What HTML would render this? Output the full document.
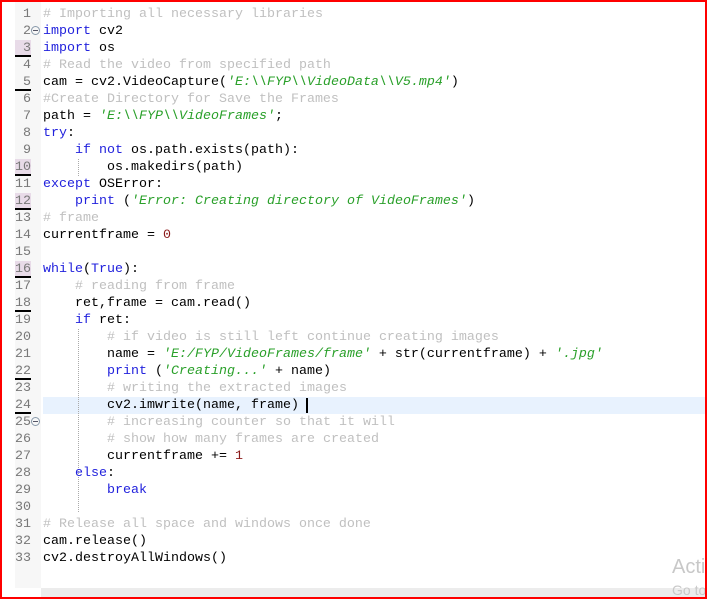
<!DOCTYPE html><html><head><style>
body{margin:0;width:707px;height:599px;overflow:hidden;background:#fff;position:relative;font-family:"Liberation Mono",monospace;}
.frame{position:absolute;left:0;top:0;width:703px;height:595px;border:2px solid #f00;}
.gut{position:absolute;left:15px;top:2px;width:26px;height:586px;background:#f7f7f7;}
.hl{position:absolute;left:43px;top:397px;width:662px;height:17px;background:#e8f2fe;}
.ln{position:absolute;left:15px;width:16px;text-align:right;font-size:13.33px;color:#787878;height:17px;line-height:17px;}
.ln.p{background:#e8dbe8;}
.ln.u{border-bottom:2px solid #000;height:15px;line-height:17px;}
.c{position:absolute;left:43px;font-size:13.33px;line-height:17px;height:17px;white-space:pre;color:#000;}
.k{color:#2222dd}.s{color:#2aa02a;font-style:italic}.m{color:#c0c0c0}.n{color:#8b1a1a}
.g{position:absolute;width:0;border-left:1px dotted #aaa;}
.fold{position:absolute;left:31px;width:7px;height:7px;border:1px solid #8899aa;border-radius:50%;font-size:0}
.fold:after{content:"";position:absolute;left:1px;top:3px;width:5px;height:1px;background:#556;}
.sb{position:absolute;left:41px;top:588px;width:664px;height:9px;background:#ececec;}
</style></head><body>
<div class="gut"></div>
<div class="hl"></div>
<div class="sb"></div>
<div class="g" style="left:78px;top:159px;height:17px"></div>
<div class="g" style="left:78px;top:329px;height:183px"></div>
<div class="fold" style="top:26px"></div>
<div class="fold" style="top:417px"></div>
<div id="L"></div>
<div style="position:absolute;left:306px;top:398px;width:2px;height:15px;background:#000"></div>
<div style="position:absolute;left:672px;top:556px;font-family:'Liberation Sans',sans-serif;font-size:20px;color:#c8c8c8">Acti</div>
<div style="position:absolute;left:672px;top:582px;font-family:'Liberation Sans',sans-serif;font-size:14px;color:#c8c8c8">Go to</div>
<div class="frame"></div>
<script>
var lines=[
'<span class="m"># Importing all necessary libraries</span>',
'<span class="k">import</span> cv2',
'<span class="k">import</span> os',
'<span class="m"># Read the video from specified path</span>',
'cam = cv2.VideoCapture(<span class="s">\'E:\\\\FYP\\\\VideoData\\\\V5.mp4\'</span>)',
'<span class="m">#Create Directory for Save the Frames</span>',
'path = <span class="s">\'E:\\\\FYP\\\\VideoFrames\'</span>;',
'<span class="k">try</span>:',
'    <span class="k">if not</span> os.path.exists(path):',
'        os.makedirs(path)',
'<span class="k">except</span> OSError:',
'    <span class="k">print</span> (<span class="s">\'Error: Creating directory of VideoFrames\'</span>)',
'<span class="m"># frame</span>',
'currentframe = <span class="n">0</span>',
'',
'<span class="k">while</span>(<span class="k">True</span>):',
'    <span class="m"># reading from frame</span>',
'    ret,frame = cam.read()',
'    <span class="k">if</span> ret:',
'        <span class="m"># if video is still left continue creating images</span>',
'        name = <span class="s">\'E:/FYP/VideoFrames/frame\'</span> + str(currentframe) + <span class="s">\'.jpg\'</span>',
'        <span class="k">print</span> (<span class="s">\'Creating...\'</span> + name)',
'        <span class="m"># writing the extracted images</span>',
'        cv2.imwrite(name, frame)',
'        <span class="m"># increasing counter so that it will</span>',
'        <span class="m"># show how many frames are created</span>',
'        currentframe += <span class="n">1</span>',
'    <span class="k">else</span>:',
'        <span class="k">break</span>',
'',
'<span class="m"># Release all space and windows once done</span>',
'cam.release()',
'cv2.destroyAllWindows()'];
var P=[3,10,12,16],U=[3,5,10,12,16,18,22,24],h='';
for(var i=0;i<lines.length;i++){var n=i+1,t=6+i*17;
var cl='ln'+(P.indexOf(n)>=0?' p':'')+(U.indexOf(n)>=0?' u':'');
h+='<div class="'+cl+'" style="top:'+t+'px">'+n+'</div><div class="c" style="top:'+t+'px">'+lines[i]+'</div>';}
document.getElementById('L').innerHTML=h;
</script>
</body></html>
